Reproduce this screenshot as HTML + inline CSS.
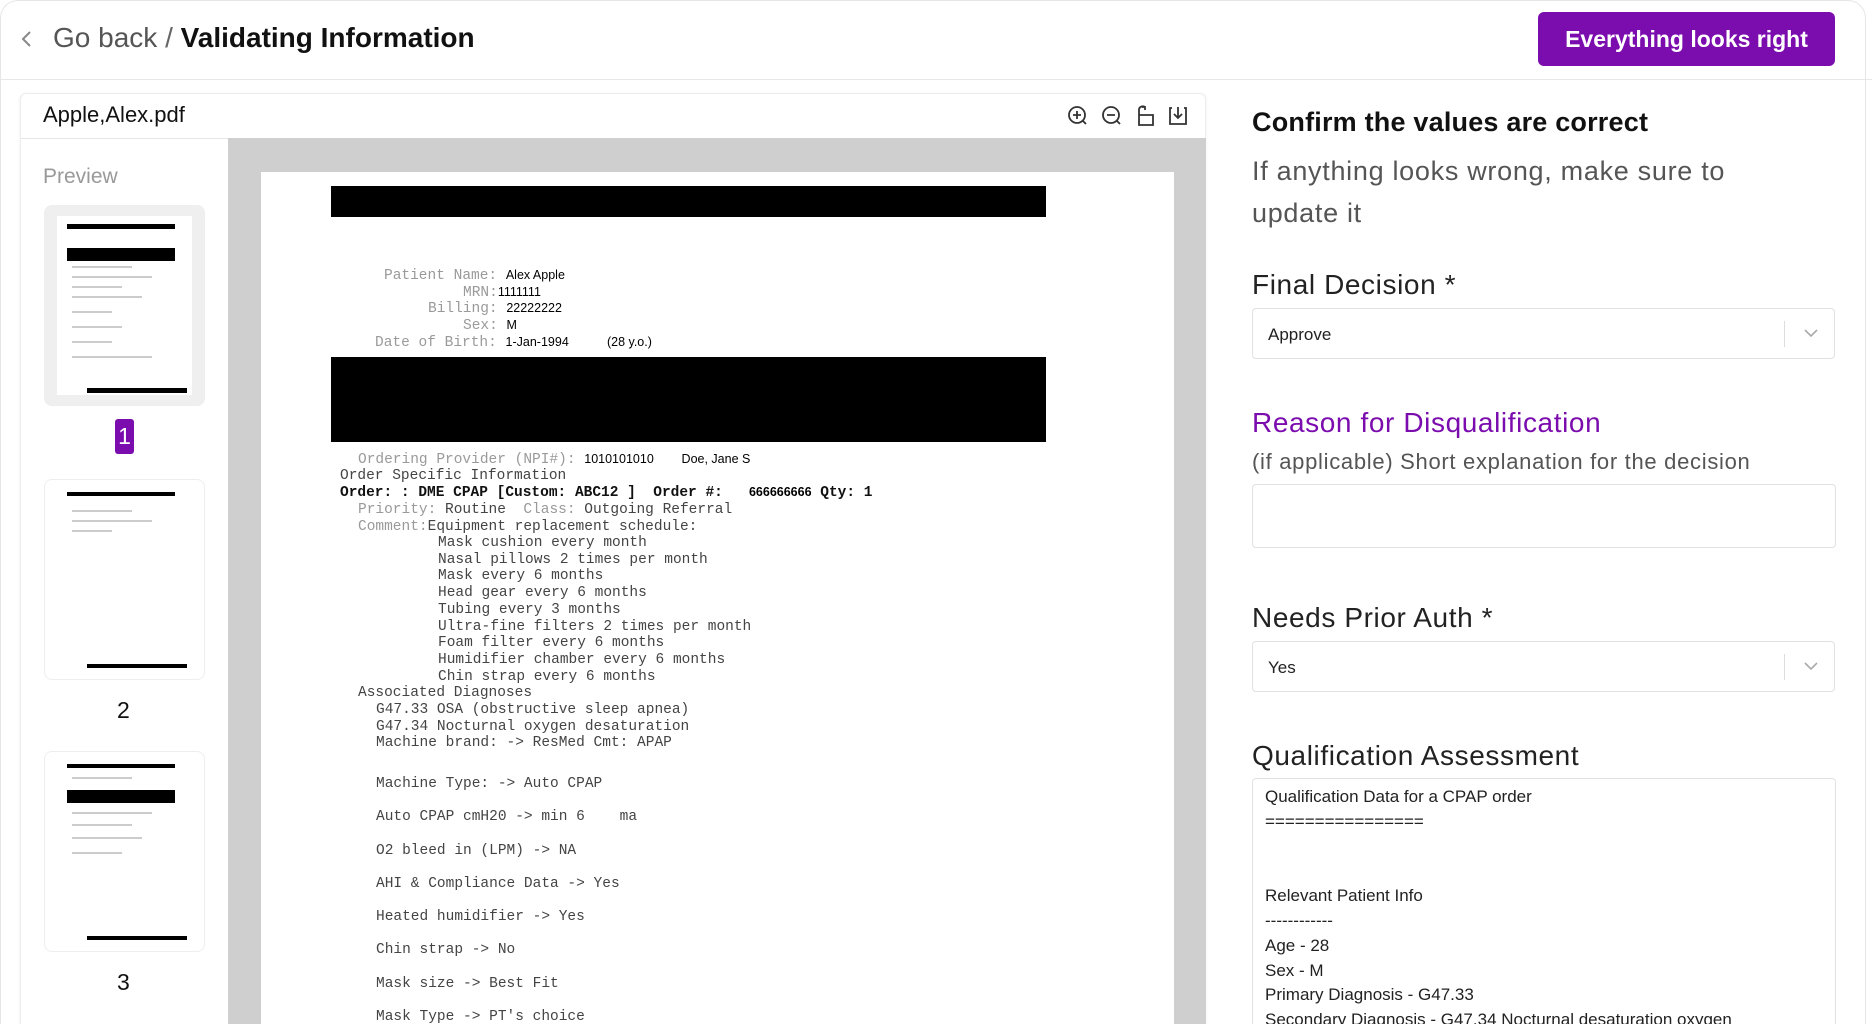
<!DOCTYPE html>
<html style="width:1872px;height:1024px;overflow:hidden"><head><meta charset="utf-8"><style>
*{box-sizing:border-box;margin:0;padding:0}
body{width:1872px;height:1024px;overflow:hidden;background:#fff;font-family:"Liberation Sans",sans-serif;position:relative;color:#111}
.abs{position:absolute}
.frame{position:absolute;left:0;top:0;width:1866px;height:1024px;border:1px solid #e6e6e6;border-bottom:none;border-radius:18px 18px 0 0}
.hdr{position:absolute;left:0;top:79px;width:1872px;height:1px;background:#e8e8e8}
.btn{left:1538px;top:12px;width:297px;height:54px;background:#7b0cae;border-radius:6px;color:#fff;font-size:23px;font-weight:bold;display:flex;align-items:center;justify-content:center}
.card{left:20px;top:93px;width:1186px;height:931px;border:1px solid #ececec;border-bottom:none;border-radius:6px 6px 0 0;box-shadow:0 1px 4px rgba(0,0,0,.06);background:#fff}
.gray{left:228px;top:138px;width:978px;height:886px;background:#cfcfcf}
.page{left:261px;top:172px;width:913px;height:852px;background:#fff}
.bar{background:#000;position:absolute}
.mono{font-family:"Liberation Mono",monospace;font-size:14.5px;white-space:pre;position:absolute;color:#444}
.lab{color:#9a9a9a}
.v{font-family:"Liberation Sans",sans-serif;font-size:12.5px;color:#000}
.thumb{position:absolute;left:44px;width:161px;height:201px;border:1px solid #eee;border-radius:8px;background:#fff}
.thumb.sel{background:#efefef}
.tp{position:absolute;left:12px;top:10px;right:12px;bottom:10px;background:#fff}
.tl{position:absolute;height:2px;background:#ccc}
.h{font-size:28px;letter-spacing:0.6px;color:#222}
.sel2{position:absolute;left:1252px;width:583px;height:51px;border:1px solid #e2e2e2;border-radius:4px;background:#fff;font-size:17px;color:#222;padding:16px 0 0 15px}
.sel2 .dv{position:absolute;left:531px;top:12px;width:1px;height:26px;background:#ddd}
.ta{font-size:17px;line-height:24.8px;color:#222}
</style></head><body>
<div class="frame"></div>
<svg class="abs" style="left:20px;top:29px" width="14" height="20" viewBox="0 0 14 20"><path d="M10 3 L3 10 L10 17" fill="none" stroke="#888" stroke-width="2"/></svg>
<div class="abs" style="left:53px;top:22px;font-size:28px;color:#555">Go back <span style="color:#666">/</span> <b style="color:#111;font-weight:600">Validating Information</b></div>
<div class="abs btn">Everything looks right</div>
<div class="hdr"></div>

<div class="abs card"></div>
<div class="abs" style="left:43px;top:102px;font-size:22px;color:#111">Apple,Alex.pdf</div>
<svg class="abs" style="left:1066px;top:103px" width="130" height="26" viewBox="0 0 130 26" fill="none" stroke="#333" stroke-width="1.8">
<circle cx="11" cy="12" r="8"/><path d="M17 18l3 3M11 8v8M7 12h8"/>
<circle cx="45" cy="12" r="8"/><path d="M51 18l3 3M41 12h8"/>
<path d="M73 12h14v10H73zM73 12V6a4 4 0 0 1 6-2M76 4l3 0 0 3"/>
<path d="M106 5h-2v16h16V5h-2M112 4v11M108 11l4 4 4-4"/>
</svg>
<div class="abs" style="left:21px;top:138px;width:1184px;height:1px;background:#e6e6e6"></div>
<div class="abs" style="left:43px;top:165px;font-size:21px;color:#999">Preview</div>

<div class="thumb sel" style="top:205px"><div class="tp">
<div class="bar" style="left:10px;top:8px;width:108px;height:5px"></div>
<div class="bar" style="left:10px;top:32px;width:108px;height:13px"></div>
<div class="tl" style="left:15px;top:50px;width:60px"></div><div class="tl" style="left:15px;top:60px;width:80px"></div><div class="tl" style="left:15px;top:70px;width:50px"></div><div class="tl" style="left:15px;top:80px;width:70px"></div><div class="tl" style="left:15px;top:95px;width:40px"></div><div class="tl" style="left:15px;top:110px;width:50px"></div><div class="tl" style="left:15px;top:125px;width:40px"></div><div class="tl" style="left:15px;top:140px;width:80px"></div>
<div class="bar" style="left:30px;top:172px;width:100px;height:5px"></div></div></div>
<div class="abs" style="left:115px;top:419px;width:19px;height:35px;background:#7b0cae;border-radius:3px;color:#fff;font-size:23px;text-align:center;line-height:35px">1</div>

<div class="thumb" style="top:479px"><div class="tp">
<div class="bar" style="left:10px;top:2px;width:108px;height:4px"></div>
<div class="tl" style="left:15px;top:20px;width:60px"></div><div class="tl" style="left:15px;top:30px;width:80px"></div><div class="tl" style="left:15px;top:40px;width:40px"></div>
<div class="bar" style="left:30px;top:174px;width:100px;height:4px"></div></div></div>
<div class="abs" style="left:117px;top:697px;font-size:23px">2</div>

<div class="thumb" style="top:751px"><div class="tp">
<div class="bar" style="left:10px;top:2px;width:108px;height:4px"></div>
<div class="bar" style="left:10px;top:28px;width:108px;height:13px"></div>
<div class="tl" style="left:15px;top:15px;width:60px"></div><div class="tl" style="left:15px;top:50px;width:80px"></div><div class="tl" style="left:15px;top:62px;width:60px"></div><div class="tl" style="left:15px;top:75px;width:70px"></div><div class="tl" style="left:15px;top:90px;width:50px"></div>
<div class="bar" style="left:30px;top:174px;width:100px;height:4px"></div></div></div>
<div class="abs" style="left:117px;top:969px;font-size:23px">3</div>

<div class="abs gray"></div>
<div class="abs page"></div>
<div class="bar" style="left:331px;top:186px;width:715px;height:31px"></div>
<div class="bar" style="left:331px;top:357px;width:715px;height:85px"></div>

<div class="mono" style="left:384px;top:268px"><span class="lab">Patient Name:</span> <span class="v">Alex Apple</span></div>
<div class="mono" style="left:463px;top:285px"><span class="lab">MRN:</span><span class="v">1111111</span></div>
<div class="mono" style="left:428px;top:301px"><span class="lab">Billing:</span> <span class="v">22222222</span></div>
<div class="mono" style="left:463px;top:318px"><span class="lab">Sex:</span> <span class="v">M</span></div>
<div class="mono" style="left:375px;top:335px"><span class="lab">Date of Birth:</span> <span class="v">1-Jan-1994&nbsp;&nbsp;&nbsp;&nbsp;&nbsp;&nbsp;&nbsp;&nbsp;&nbsp;&nbsp;&nbsp;(28 y.o.)</span></div>
<div class="mono" style="left:358px;top:452px"><span class="lab">Ordering Provider (NPI#):</span> <span class="v">1010101010&nbsp;&nbsp;&nbsp;&nbsp;&nbsp;&nbsp;&nbsp;&nbsp;Doe, Jane S</span></div>
<div class="mono" style="left:340px;top:468px">Order Specific Information</div>
<div class="mono" style="left:340px;top:485px;color:#111;font-weight:bold">Order: : DME CPAP [Custom: ABC12 ]  Order #:   <span class="v">666666666</span> Qty: 1</div>
<div class="mono" style="left:358px;top:502px"><span class="lab">Priority:</span> Routine  <span class="lab">Class:</span> Outgoing Referral</div>
<div class="mono" style="left:358px;top:519px"><span class="lab">Comment:</span>Equipment replacement schedule:</div>
<div class="mono" style="left:438px;top:535px;line-height:16.7px">Mask cushion every month
Nasal pillows 2 times per month
Mask every 6 months
Head gear every 6 months
Tubing every 3 months
Ultra-fine filters 2 times per month
Foam filter every 6 months
Humidifier chamber every 6 months
Chin strap every 6 months</div>
<div class="mono" style="left:358px;top:685px">Associated Diagnoses</div>
<div class="mono" style="left:376px;top:702px;line-height:16.7px">G47.33 OSA (obstructive sleep apnea)
G47.34 Nocturnal oxygen desaturation
Machine brand: -> ResMed Cmt: APAP</div>
<div class="mono" style="left:376px;top:768px;line-height:33.3px">Machine Type: -> Auto CPAP
Auto CPAP cmH20 -> min 6    ma
O2 bleed in (LPM) -> NA
AHI &amp; Compliance Data -> Yes
Heated humidifier -> Yes
Chin strap -> No
Mask size -> Best Fit
Mask Type -> PT's choice</div>

<div class="abs" style="left:1252px;top:107px;font-size:27px;font-weight:600;color:#111;letter-spacing:0.2px">Confirm the values are correct</div>
<div class="abs" style="left:1252px;top:150px;font-size:27px;letter-spacing:0.7px;line-height:42px;color:#555">If anything looks wrong, make sure to<br>update it</div>
<div class="abs h" style="left:1252px;top:269px">Final Decision *</div>
<div class="sel2" style="top:308px">Approve<div class="dv"></div><svg class="abs" style="left:550px;top:18px" width="16" height="12"><path d="M2 3l6 6 6-6" fill="none" stroke="#aaa" stroke-width="1.6"/></svg></div>
<div class="abs h" style="left:1252px;top:407px;color:#7b0cae;font-weight:500">Reason for Disqualification</div>
<div class="abs" style="left:1252px;top:449px;font-size:22px;letter-spacing:0.7px;color:#555">(if applicable) Short explanation for the decision</div>
<div class="abs" style="left:1252px;top:484px;width:584px;height:64px;border:1px solid #e2e2e2;border-radius:4px"></div>
<div class="abs h" style="left:1252px;top:602px">Needs Prior Auth *</div>
<div class="sel2" style="top:641px">Yes<div class="dv"></div><svg class="abs" style="left:550px;top:18px" width="16" height="12"><path d="M2 3l6 6 6-6" fill="none" stroke="#aaa" stroke-width="1.6"/></svg></div>
<div class="abs h" style="left:1252px;top:740px">Qualification Assessment</div>
<div class="abs" style="left:1252px;top:778px;width:584px;height:246px;border:1px solid #e2e2e2;border-bottom:none;border-radius:4px 4px 0 0"></div>
<div class="abs ta" style="left:1265px;top:785px;height:239px;overflow:hidden">Qualification Data for a CPAP order<br>================<br><br><br>Relevant Patient Info<br>------------<br>Age - 28<br>Sex - M<br>Primary Diagnosis - G47.33<br>Secondary Diagnosis - G47.34 Nocturnal desaturation oxygen</div>
</body></html>
